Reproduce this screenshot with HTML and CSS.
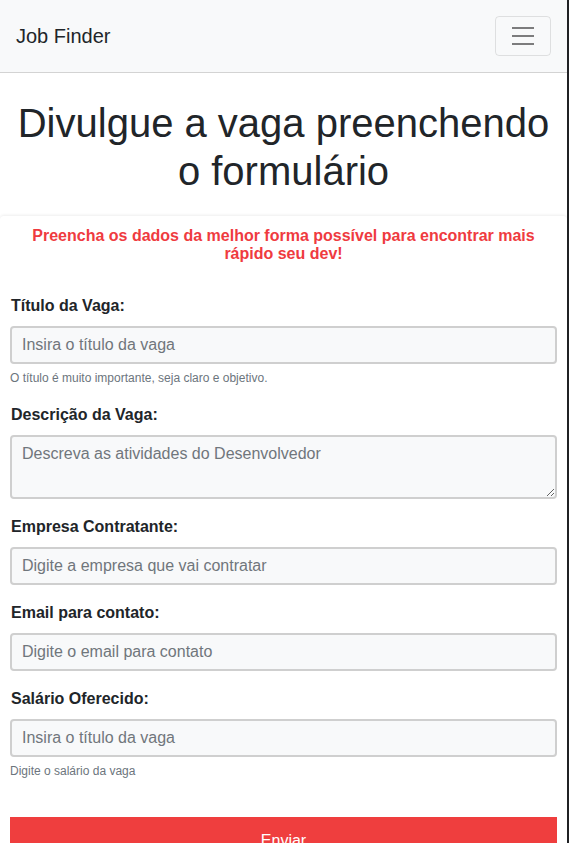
FILE: index.html
```html
<!DOCTYPE html>
<html lang="pt-BR">
<head>
<meta charset="utf-8">
<title>Job Finder</title>
<link rel="stylesheet" href="styles.css">
</head>
<body>
<nav class="navbar">
  <span class="brand">Job Finder</span>
  <button class="toggler" type="button" aria-label="Menu">
    <svg class="toggler-icon" viewBox="0 0 30 30" width="30" height="30">
      <path d="M4 7h22M4 15h22M4 23h22" stroke="rgba(0,0,0,0.5)" stroke-width="2" stroke-linecap="butt" fill="none"/>
    </svg>
  </button>
</nav>
<main class="page">
  <h1 class="title">Divulgue a vaga preenchendo o formulário</h1>
  <section class="card">
    <p class="lead">Preencha os dados da melhor forma possível para encontrar mais rápido seu dev!</p>
    <form class="form">
      <div class="group">
        <label class="label">Título da Vaga:</label>
        <input class="control" type="text" placeholder="Insira o título da vaga">
        <small class="help">O título é muito importante, seja claro e objetivo.</small>
      </div>
      <div class="group">
        <label class="label">Descrição da Vaga:</label>
        <textarea class="control area" rows="2" placeholder="Descreva as atividades do Desenvolvedor"></textarea>
      </div>
      <div class="group">
        <label class="label">Empresa Contratante:</label>
        <input class="control" type="text" placeholder="Digite a empresa que vai contratar">
      </div>
      <div class="group">
        <label class="label">Email para contato:</label>
        <input class="control" type="text" placeholder="Digite o email para contato">
      </div>
      <div class="group">
        <label class="label">Salário Oferecido:</label>
        <input class="control" type="text" placeholder="Insira o título da vaga">
        <small class="help">Digite o salário da vaga</small>
      </div>
      <button class="submit" type="button">Enviar</button>
    </form>
  </section>
</main>
</body>
</html>
```
FILE: styles.css
```css
html {
  background: #202124;
}
body {
  margin: 0 2px 0 0;
  background: #ffffff;
  min-height: 100vh;
  font-family: "Liberation Sans", Arial, sans-serif;
  color: #212529;
  font-size: 16px;
  line-height: 1.5;
}
.navbar {
  display: flex;
  align-items: center;
  justify-content: space-between;
  padding: 16px 16px;
  background: #f8f9fa;
  border-bottom: 1px solid #d3d3d3;
  height: 40px;
}
.brand {
  font-size: 20px;
  color: #212529;
  line-height: 30px;
}
.toggler {
  display: flex;
  align-items: center;
  justify-content: center;
  width: 56px;
  height: 40px;
  padding: 4px 12px;
  background: transparent;
  border: 1px solid rgba(0,0,0,0.1);
  border-radius: 4px;
}
.toggler-icon {
  display: block;
}
.title {
  margin: 26px 0 21px;
  padding: 0 15px;
  text-align: center;
  font-size: 40px;
  font-weight: 400;
  line-height: 1.2;
  color: #212529;
}
.card {
  border-radius: 4px;
  box-shadow: 0 -1px 3px rgba(0,0,0,0.07);
  padding: 11px 10px 0;
}
.lead {
  margin: 0 0 31px;
  text-align: center;
  color: #ef3b3f;
  font-weight: 700;
  font-size: 16px;
  line-height: 18px;
}
.form {
  display: flex;
  flex-direction: column;
}
.group {
  display: flex;
  flex-direction: column;
  margin-bottom: 16px;
}
.label {
  display: block;
  font-weight: 700;
  font-size: 16px;
  line-height: 24px;
  margin: 0 0 8px 1px;
  color: #212529;
}
.control {
  display: block;
  box-sizing: border-box;
  width: 100%;
  height: 38px;
  padding: 5px 10px;
  font-family: "Liberation Sans", Arial, sans-serif;
  font-size: 16px;
  line-height: 24px;
  color: #495057;
  background: #f8f9fa;
  border: 2px solid #cfcfcf;
  border-radius: 4px;
  outline: none;
}
.control::placeholder {
  color: #70767c;
}
.area {
  height: 64px;
  resize: vertical;
}
.help {
  display: block;
  margin-top: 5px;
  font-size: 12px;
  line-height: 18px;
  color: #6c757d;
}
.submit {
  margin-top: 21px;
  width: 100%;
  height: 48px;
  padding: 10px 12px;
  background: #ef3e3e;
  color: #ffffff;
  border: none;
  font-family: "Liberation Sans", Arial, sans-serif;
  font-size: 16px;
  line-height: 24px;
}
```
